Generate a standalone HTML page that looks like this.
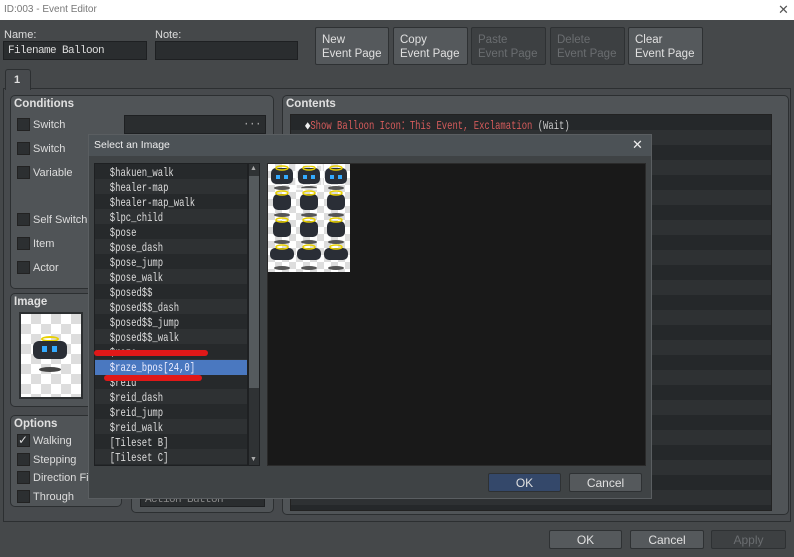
<!DOCTYPE html>
<html><head><meta charset="utf-8"><style>
*{box-sizing:border-box;margin:0;padding:0}
body{width:794px;height:557px;overflow:hidden;background:#45484a;font-family:"Liberation Sans",sans-serif;font-size:11px;color:#d8d8d8;position:relative}
.a{position:absolute}
.title{left:0;top:0;width:794px;height:20px;background:#fff;color:#777;font-size:10px;padding:4px 4px}
.inp{background:#2a2d2f;border:1px solid #1e2022;font-family:"Liberation Mono",monospace;font-size:11px;color:#ddd;padding:3px 4px;letter-spacing:-0.6px}
.btn{background:#55595c;border:1px solid #2e3133;border-radius:2px;color:#e0e0e0;font-size:11.5px;line-height:14px;padding:5px 6px}
.dis{background:#3d4042;color:#6a6d70}
.grp{border:1px solid #2c2f31;border-radius:5px;background:#505457}
.gt{font-weight:bold;font-size:11.5px;color:#e0e0e0}
.cb{width:13px;height:13px;background:#2c2f31;border:1px solid #222}
.lbl{font-size:11px;color:#ddd}
.mono{font-family:"Liberation Mono",monospace;font-size:12px;transform:scaleX(0.74);transform-origin:0 0;white-space:nowrap}
.row{height:15px;padding-left:20px;line-height:16px;color:#ddd;width:208px}
.cbtn{text-align:center;padding:2px;font-size:12px}
</style></head><body>
<div class="a title">ID:003 - Event Editor</div>
<div class="a" style="left:778px;top:2px;font-size:13px;color:#555">✕</div>
<div class="a lbl" style="left:4px;top:29px">Name:</div>
<div class="a inp" style="left:3px;top:41px;width:144px;height:19px">Filename Balloon</div>
<div class="a lbl" style="left:155px;top:29px">Note:</div>
<div class="a inp" style="left:155px;top:41px;width:143px;height:19px"></div>
<div class="a btn" style="left:315px;top:27px;width:74px;height:38px">New<br>Event Page</div>
<div class="a btn" style="left:393px;top:27px;width:75px;height:38px">Copy<br>Event Page</div>
<div class="a btn dis" style="left:471px;top:27px;width:75px;height:38px">Paste<br>Event Page</div>
<div class="a btn dis" style="left:550px;top:27px;width:75px;height:38px">Delete<br>Event Page</div>
<div class="a btn" style="left:628px;top:27px;width:75px;height:38px">Clear<br>Event Page</div>
<div class="a" style="left:3px;top:88px;width:788px;height:434px;border:1px solid #2c2f31;background:#474a4d"></div>
<div class="a" style="left:5px;top:69px;width:26px;height:21px;background:#474a4d;border:1px solid #2c2f31;border-bottom:none;border-radius:3px 3px 0 0;font-weight:bold;padding:4px 8px;color:#e0e0e0">1</div>
<div class="a grp" style="left:10px;top:95px;width:264px;height:194px"></div>
<div class="a gt" style="left:14px;top:98px">Conditions</div>
<div class="a cb" style="left:17px;top:118px"></div><div class="a lbl" style="left:33px;top:119px">Switch</div>
<div class="a inp" style="left:124px;top:115px;width:142px;height:19px;text-align:right;color:#aaa">···</div>
<div class="a cb" style="left:17px;top:142px"></div><div class="a lbl" style="left:33px;top:143px">Switch</div>
<div class="a cb" style="left:17px;top:166px"></div><div class="a lbl" style="left:33px;top:167px">Variable</div>
<div class="a cb" style="left:17px;top:213px"></div><div class="a lbl" style="left:33px;top:214px">Self Switch</div>
<div class="a cb" style="left:17px;top:237px"></div><div class="a lbl" style="left:33px;top:238px">Item</div>
<div class="a cb" style="left:17px;top:261px"></div><div class="a lbl" style="left:33px;top:262px">Actor</div>
<div class="a grp" style="left:10px;top:293px;width:112px;height:114px"></div>
<div class="a gt" style="left:14px;top:296px">Image</div>
<div class="a" style="left:19px;top:312px;width:64px;height:87px;border:2px solid #2c2f31;background:repeating-conic-gradient(#ddd 0 25%,#fff 0 50%) 0 0/20px 20px"></div>
<div class="a" style="left:41px;top:336px;width:18px;height:6px;border:2px solid #e8d000;border-radius:50%"></div>
<div class="a" style="left:33px;top:341px;width:34px;height:18px;background:#2a2e36;border-radius:6px"></div>
<div class="a" style="left:42px;top:346px;width:5px;height:6px;background:#3af"></div><div class="a" style="left:52px;top:346px;width:5px;height:6px;background:#3af"></div>
<div class="a" style="left:39px;top:367px;width:22px;height:5px;background:#444;border-radius:50%"></div>
<div class="a grp" style="left:10px;top:415px;width:112px;height:92px"></div>
<div class="a gt" style="left:14px;top:418px">Options</div>
<div class="a cb" style="left:17px;top:434px;color:#ddd;font-size:12px;line-height:10px">✓</div><div class="a lbl" style="left:33px;top:435px">Walking</div>
<div class="a cb" style="left:17px;top:453px"></div><div class="a lbl" style="left:33px;top:454px">Stepping</div>
<div class="a cb" style="left:17px;top:471px"></div><div class="a lbl" style="left:33px;top:472px">Direction Fix</div>
<div class="a cb" style="left:17px;top:490px"></div><div class="a lbl" style="left:33px;top:491px">Through</div>
<div class="a grp" style="left:131px;top:415px;width:143px;height:98px"></div>
<div class="a inp" style="left:140px;top:490px;width:125px;height:17px;color:#888">Action Button</div>
<div class="a grp" style="left:282px;top:95px;width:507px;height:420px"></div>
<div class="a gt" style="left:286px;top:98px">Contents</div>
<div class="a" style="left:290px;top:114px;width:482px;height:397px;background:repeating-linear-gradient(#25282a 0 15px,#2e3133 15px 30px);border:1px solid #222"></div>
<div class="a mono" style="left:305px;top:116px;color:#d65c5c"><span style="color:#eee">◆</span>Show Balloon Icon：This Event, Exclamation <span style="color:#ccc">(Wait)</span></div>
<div class="a" style="left:88px;top:134px;width:564px;height:365px;background:#3f4345;border:1px solid #5a5e61"></div>
<div class="a" style="left:89px;top:135px;width:562px;height:21px;background:#4c5256;padding:4px 5px;font-size:10.5px;color:#eee">Select an Image</div>
<div class="a" style="left:632px;top:137px;font-size:13px;color:#eee">✕</div>
<div class="a" style="left:94px;top:163px;width:154px;height:303px;background:repeating-linear-gradient(#26292b 0 15px,#2e3133 15px 30px);border:1px solid #1e2022;padding-top:1px;overflow:hidden">
<div class="mono">
<div class="row">$hakuen_walk</div><div class="row">$healer-map</div><div class="row">$healer-map_walk</div><div class="row">$lpc_child</div><div class="row">$pose</div><div class="row">$pose_dash</div><div class="row">$pose_jump</div><div class="row">$pose_walk</div><div class="row">$posed$$</div><div class="row">$posed$$_dash</div><div class="row">$posed$$_jump</div><div class="row">$posed$$_walk</div><div class="row">$raze</div><div class="row" style="background:#4a78c0;color:#eef">$raze_bpos[24,0]</div><div class="row">$reid</div><div class="row">$reid_dash</div><div class="row">$reid_jump</div><div class="row">$reid_walk</div><div class="row">[Tileset B]</div><div class="row">[Tileset C]</div>
</div></div>
<div class="a" style="left:248px;top:163px;width:12px;height:303px;background:#2f3234;border:1px solid #1e2022"></div>
<div class="a" style="left:249px;top:176px;width:10px;height:212px;background:#555a5d"></div>
<div class="a" style="left:250px;top:165px;font-size:7px;color:#aaa">▲</div>
<div class="a" style="left:250px;top:456px;font-size:7px;color:#aaa">▼</div>
<div class="a" style="left:94px;top:350px;width:114px;height:6px;background:#e01818;border-radius:3px"></div>
<div class="a" style="left:104px;top:375px;width:98px;height:6px;background:#e01818;border-radius:3px"></div>
<div class="a" style="left:267px;top:163px;width:379px;height:303px;background:#191919;border:1px solid #2a2a2a"></div>
<div class="a" style="left:268px;top:164px;width:82px;height:108px;background:repeating-conic-gradient(#ddd 0 25%,#fff 0 50%) 0 0/14px 14px"></div>
<svg class="a" style="left:268px;top:164px" width="82" height="108">
<g fill="#2a2e36"><rect x="3" y="4" width="22" height="16" rx="5"/><rect x="30" y="4" width="22" height="16" rx="5"/><rect x="57" y="4" width="22" height="16" rx="5"/>
<rect x="5" y="30" width="18" height="16" rx="5"/><rect x="32" y="30" width="18" height="16" rx="5"/><rect x="59" y="30" width="18" height="16" rx="5"/>
<rect x="5" y="57" width="18" height="16" rx="5"/><rect x="32" y="57" width="18" height="16" rx="5"/><rect x="59" y="57" width="18" height="16" rx="5"/>
<rect x="2" y="84" width="24" height="12" rx="5"/><rect x="29" y="84" width="24" height="12" rx="5"/><rect x="56" y="84" width="24" height="12" rx="5"/></g>
<g fill="#3af"><rect x="8" y="11" width="4" height="4"/><rect x="16" y="11" width="4" height="4"/><rect x="35" y="11" width="4" height="4"/><rect x="43" y="11" width="4" height="4"/><rect x="62" y="11" width="4" height="4"/><rect x="70" y="11" width="4" height="4"/></g>
<g fill="#555"><ellipse cx="14" cy="24" rx="8" ry="2"/><ellipse cx="41" cy="24" rx="8" ry="2"/><ellipse cx="68" cy="24" rx="8" ry="2"/><ellipse cx="14" cy="51" rx="8" ry="2"/><ellipse cx="41" cy="51" rx="8" ry="2"/><ellipse cx="68" cy="51" rx="8" ry="2"/><ellipse cx="14" cy="78" rx="8" ry="2"/><ellipse cx="41" cy="78" rx="8" ry="2"/><ellipse cx="68" cy="78" rx="8" ry="2"/><ellipse cx="14" cy="104" rx="8" ry="2"/><ellipse cx="41" cy="104" rx="8" ry="2"/><ellipse cx="68" cy="104" rx="8" ry="2"/></g>
<g fill="none" stroke="#e8d000" stroke-width="1.5"><ellipse cx="14" cy="4" rx="6" ry="2"/><ellipse cx="41" cy="4" rx="6" ry="2"/><ellipse cx="68" cy="4" rx="6" ry="2"/><ellipse cx="14" cy="29" rx="6" ry="2"/><ellipse cx="41" cy="29" rx="6" ry="2"/><ellipse cx="68" cy="29" rx="6" ry="2"/><ellipse cx="14" cy="56" rx="6" ry="2"/><ellipse cx="41" cy="56" rx="6" ry="2"/><ellipse cx="68" cy="56" rx="6" ry="2"/><ellipse cx="14" cy="83" rx="6" ry="2"/><ellipse cx="41" cy="83" rx="6" ry="2"/><ellipse cx="68" cy="83" rx="6" ry="2"/></g>
<rect x="28" y="1" width="26" height="24" fill="none" stroke="#fff" stroke-width="1.5"/>
</svg>
<div class="a btn cbtn" style="left:488px;top:473px;width:73px;height:19px;background:#34486a">OK</div>
<div class="a btn cbtn" style="left:569px;top:473px;width:73px;height:19px">Cancel</div>
<div class="a btn cbtn" style="left:549px;top:530px;width:73px;height:19px">OK</div>
<div class="a btn cbtn" style="left:630px;top:530px;width:74px;height:19px">Cancel</div>
<div class="a btn cbtn dis" style="left:711px;top:530px;width:75px;height:19px">Apply</div>
</body></html>
